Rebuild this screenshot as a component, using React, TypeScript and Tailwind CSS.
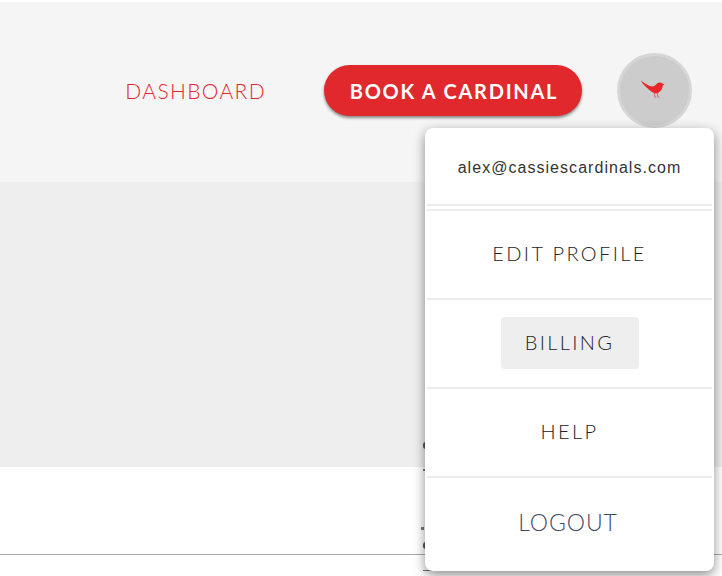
import React from "react";

const Bird = () => (
  <svg width="26" height="20" viewBox="0 0 26 20" className="block">
    <path d="M1 1.5 C4 4 7 6 10 7 C13 8 15 7 17 4.5 C18.5 3 21 3 22.5 4.5 L24.5 5.5 L22.8 6.5 C22.5 9.5 21 12.5 18 14 L16.5 14.5 L14 14 C11 12.5 8 10 5.5 7.5 C3.5 5.5 2 4 1 1.5 Z" fill="#e8262b" />
    <path d="M14.5 14 L14.8 18 M17.5 14.5 L17.8 18 M14.8 18 L16.2 18.4 M17.8 18 L19.2 18.4" stroke="#e8262b" strokeWidth="0.8" fill="none" opacity="0.8" />
  </svg>
);

const Divider = () => <div className="mx-[2px] h-[2px] bg-[#ececec]" />;

const raleway = "font-['Lato','Open_Sans',sans-serif]";

export default function App() {
  return (
    <div className="relative h-[576px] w-[722px] overflow-hidden bg-white pt-[2px]">
      <header className="flex h-[180px] items-start justify-end bg-[#f5f5f5] pr-[30px] pt-[51px]">
        <a className={`${raleway} mr-[58px] mt-[26px] text-[21px] font-light leading-[24px] tracking-[1.35px] text-[#e3282d]`}>DASHBOARD</a>
        <button className={`${raleway} mr-[35px] mt-[12px] flex h-[51px] w-[258px] items-center justify-center rounded-full bg-[#e0282d] pl-[2px] text-[20px] font-bold tracking-[1.75px] text-white shadow-[0_2px_3px_rgba(0,0,0,0.45)]`}>BOOK A CARDINAL</button>
        <div className="flex h-[75px] w-[75px] items-center justify-center rounded-full border-[3px] border-[#d6d6d6] bg-[#cccccc] pb-[4px] pr-[4px]">
          <Bird />
        </div>
      </header>
      <section className="h-[285px] bg-[#eeeeee]" />
      <section className="h-[88px] border-b border-[#a9a9a9] bg-white" />

      <div className="absolute left-[423px] top-[442px] h-[7px] w-[3px] rounded-l-full bg-[#555555]" />
      <div className="absolute left-[423px] top-[469px] h-[2px] w-[3px] bg-[#777777]" />
      <div className="absolute left-[421px] top-[527px] h-[3px] w-[3px] bg-[#777777]" />
      <div className="absolute left-[423px] top-[542px] h-[7px] w-[3px] rounded-l-full bg-[#555555]" />
      <div className="absolute left-[423px] top-[570px] h-[1px] w-[20px] bg-[#777777]" />

      <div className="absolute left-[425px] top-[128px] flex h-[443px] w-[289px] flex-col rounded-[8px] bg-white shadow-[0_4px_12px_rgba(0,0,0,0.45)]">
        <div className="flex h-[76px] items-center justify-center pt-[4px] font-['Liberation_Sans',sans-serif] text-[16px] tracking-[1.04px] text-[#333333]">alex@cassiescardinals.com</div>
        <Divider />
        <div className="h-[3px]" />
        <Divider />
        <div className={`${raleway} flex h-[87px] items-center justify-center pb-[3px] text-[20px] font-light tracking-[2.35px] text-[#222222]`}>EDIT PROFILE</div>
        <Divider />
        <div className="flex h-[87px] items-center justify-center pb-[2px]">
          <div className={`${raleway} flex h-[52px] w-[138px] items-center justify-center rounded-[4px] bg-[#eeeeee] pb-[2px] text-[20px] font-light tracking-[2.35px] text-[#222222]`}>BILLING</div>
        </div>
        <Divider />
        <div className={`${raleway} flex h-[87px] items-center justify-center pb-[4px] text-[20px] font-light tracking-[2.35px] text-[#222222]`}>HELP</div>
        <Divider />
        <div className={`${raleway} flex flex-1 items-center justify-center pb-[5px] pr-[3px] text-[23px] font-light tracking-[0.95px] text-[#3f4862]`}>LOGOUT</div>
      </div>
    </div>
  );
}
